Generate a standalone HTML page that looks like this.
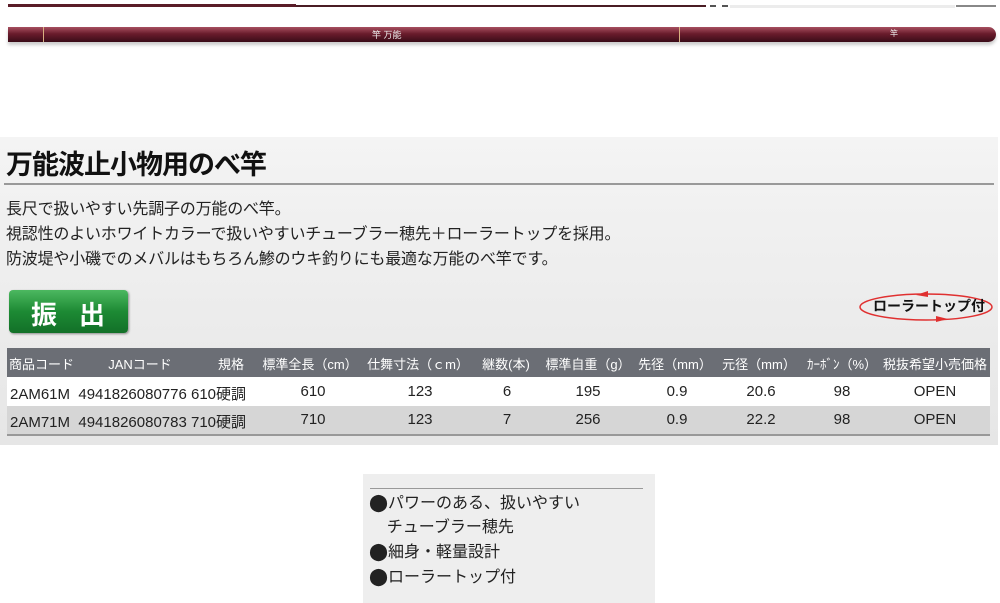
<!DOCTYPE html>
<html><head><meta charset="utf-8"><style>
body{margin:0;width:1000px;height:603px;background:#fff;position:relative;overflow:hidden;font-family:"Liberation Sans","Noto Sans CJK JP",sans-serif;}
.a{position:absolute;white-space:nowrap}
.c{position:absolute;white-space:nowrap;transform:translateX(-50%)}
</style></head><body>
<!-- rods -->
<div class="a" style="left:8px;top:4px;width:288px;height:3px;background:#5a1c28"></div>
<div class="a" style="left:296px;top:5px;width:410px;height:2px;background:#4a1c24"></div>
<div class="a" style="left:710px;top:5px;width:6px;height:2px;background:#555"></div>
<div class="a" style="left:722px;top:5px;width:6px;height:2px;background:#555"></div>
<div class="a" style="left:730px;top:5px;width:225px;height:3px;background:#ececec"></div>
<div class="a" style="left:956px;top:5px;width:40px;height:2px;background:#888"></div>
<div class="a" style="left:8px;top:27px;width:988px;height:15px;background:linear-gradient(#a85060,#6a1c2c 45%,#3a0c18);border-radius:0 8px 8px 0;box-shadow:0 3px 3px #ccc"></div>
<div class="a" style="left:43px;top:27px;width:1px;height:15px;background:#d8b080"></div>
<div class="a" style="left:679px;top:27px;width:1px;height:15px;background:#d8b080"></div>
<div class="a" style="left:372px;top:28px;font-size:9px;color:#eee">竿 万能</div>
<div class="a" style="left:890px;top:28px;font-size:8px;color:#eee">竿</div>
<!-- panel -->
<div class="a" style="left:0;top:137px;width:998px;height:308px;background:linear-gradient(#f4f4f4,#e6e6e6)"></div>
<div class="a" style="left:6px;top:143px;font-size:27px;font-weight:bold;color:#111;letter-spacing:-1px">万能波止小物用のべ竿</div>
<div class="a" style="left:4px;top:183px;width:990px;height:2px;background:#999"></div>
<div class="a" style="left:6px;top:197px;font-size:16px;line-height:25px;color:#222;letter-spacing:-0.2px">長尺で扱いやすい先調子の万能のべ竿。<br>視認性のよいホワイトカラーで扱いやすいチューブラー穂先＋ローラートップを採用。<br>防波堤や小磯でのメバルはもちろん鯵のウキ釣りにも最適な万能のべ竿です。</div>
<div class="a" style="left:9px;top:290px;width:119px;height:43px;border-radius:4px;background:linear-gradient(#4cb860,#1d8a34 50%,#127028);box-shadow:1px 1px 2px #888"></div>
<div class="a" style="left:31px;top:295px;font-size:26px;font-weight:bold;color:#fff;letter-spacing:22px">振出</div>
<svg class="a" style="left:856px;top:287px" width="140" height="40"><ellipse cx="70" cy="20" rx="66" ry="13" fill="none" stroke="#e03030" stroke-width="1.5"/><path d="M72 4 L60 8 L72 10Z M80 35 L92 32 L80 29Z" fill="#e03030"/></svg>
<div class="a" style="left:873px;top:296px;font-size:14px;font-weight:bold;color:#111">ローラートップ付</div>
<!-- table -->
<div class="a" style="left:7px;top:348px;width:983px;height:29px;background:#6b6e75"></div>
<div class="a" style="left:7px;top:377px;width:983px;height:29px;background:#fff"></div>
<div class="a" style="left:7px;top:406px;width:983px;height:28px;background:#d6d6d6"></div>
<div class="a" style="left:7px;top:434px;width:983px;height:2px;background:#999"></div>
<div style="color:#fff;font-size:13px">
<div class="a" style="left:9px;top:354px">商品コード</div>
<div class="c" style="left:140px;top:354px">JANコード</div>
<div class="c" style="left:231px;top:354px">規格</div>
<div class="c" style="left:310px;top:354px">標準全長（cm）</div>
<div class="c" style="left:418px;top:354px">仕舞寸法（ｃm）</div>
<div class="c" style="left:506px;top:354px">継数(本)</div>
<div class="c" style="left:588px;top:354px">標準自重（g）</div>
<div class="c" style="left:675px;top:354px">先径（mm）</div>
<div class="c" style="left:759px;top:354px">元径（mm）</div>
<div class="c" style="left:842px;top:354px">ｶｰﾎﾞﾝ（%）</div>
<div class="c" style="left:935px;top:354px">税抜希望小売価格</div>
</div>
<div style="color:#222;font-size:15px">
<div class="a" style="left:10px;top:383px">2AM61M&nbsp; 4941826080776 610硬調</div>
<div class="c" style="left:313px;top:383px">610</div><div class="c" style="left:420px;top:383px">123</div><div class="c" style="left:507px;top:383px">6</div><div class="c" style="left:588px;top:383px">195</div><div class="c" style="left:677px;top:383px">0.9</div><div class="c" style="left:761px;top:383px">20.6</div><div class="c" style="left:842px;top:383px">98</div><div class="c" style="left:935px;top:383px">OPEN</div>
<div class="a" style="left:10px;top:411px">2AM71M&nbsp; 4941826080783 710硬調</div>
<div class="c" style="left:313px;top:411px">710</div><div class="c" style="left:420px;top:411px">123</div><div class="c" style="left:507px;top:411px">7</div><div class="c" style="left:588px;top:411px">256</div><div class="c" style="left:677px;top:411px">0.9</div><div class="c" style="left:761px;top:411px">22.2</div><div class="c" style="left:842px;top:411px">98</div><div class="c" style="left:935px;top:411px">OPEN</div>
</div>
<!-- bottom box -->
<div class="a" style="left:363px;top:474px;width:292px;height:129px;background:#eeeeee"></div>
<div class="a" style="left:370px;top:488px;width:273px;height:1px;background:#999"></div>
<div class="a" style="left:369px;top:491px;font-size:16px;line-height:24px;color:#222"><span style="font-size:17px">⬤</span>パワーのある、扱いやすい<br>&nbsp;&nbsp;&nbsp;&nbsp;チューブラー穂先<br><span style="font-size:17px">⬤</span>細身・軽量設計<br><span style="font-size:17px">⬤</span>ローラートップ付</div>
</body></html>
